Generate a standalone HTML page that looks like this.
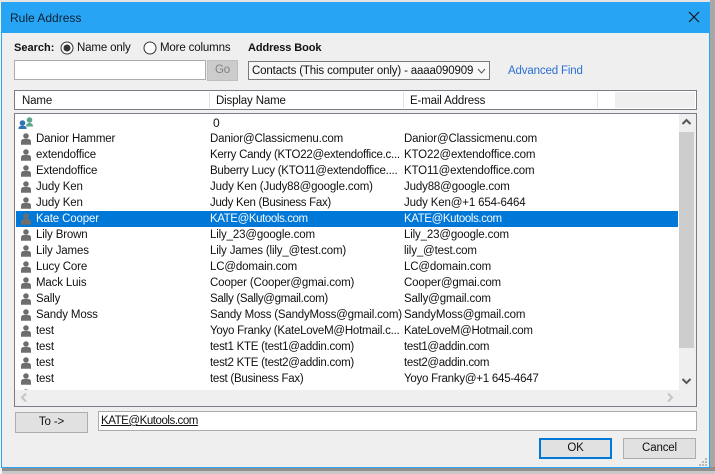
<!DOCTYPE html>
<html><head><meta charset="utf-8"><style>
html,body{margin:0;padding:0;width:715px;height:474px;overflow:hidden;background:#d8d8d8}
body{position:relative;font:11.5px "Liberation Sans",sans-serif;color:#111;letter-spacing:-.15px}
div,span,svg{position:absolute;box-sizing:border-box}
.t{white-space:nowrap;line-height:14px}
.r{left:0;width:665px;height:16px}
.r svg{left:4px;top:3px}
.r .a{left:21px;top:2px}.r .b{left:195px;top:2px}.r .c{left:389px;top:2px}
.r.sel{background:#0078d7;height:16px;color:#f4f8fc;left:1px;width:662px}
.r.sel svg{left:3px;top:2px}
.r.sel .a{left:20px;top:1px}.r.sel .b{left:194px;top:1px}.r.sel .c{left:388px;top:1px}
.btn{background:#e1e1e1;border:1px solid #adadad;text-align:center;line-height:19px}
</style></head><body>
<svg width="0" height="0" style="left:0;top:0"><defs><symbol id="p" viewBox="0 0 14 14"><circle cx="7" cy="3" r="2.800" fill="#6e6e6e"/><path d="M2 11.800V8.700C2 6.900 3.400 6 5 6H9C10.600 6 12 6.900 12 8.700V11.800Z" fill="#6e6e6e"/></symbol></defs></svg>
<div style="left:0;top:0;width:2px;height:474px;background:#f4f4f4"></div>
<div style="left:0;top:0;width:715px;height:2px;background:#e4e4e4"></div>
<div style="left:710px;top:0;width:5px;height:474px;background:#a8a8a8"></div>
<div style="left:2px;top:467px;width:713px;height:4px;background:#8f8f8f"></div>
<div style="left:2px;top:471px;width:713px;height:3px;background:#c8c8c8"></div>
<div id="w" style="left:1px;top:2px;width:709px;height:466px;background:#efefef;border:1px solid #2aa5f3;border-top:0"></div>
<div style="left:1px;top:2px;width:709px;height:31px;background:#27a4f4"></div>
<div class="t" style="left:10px;top:11px;font-size:12px;letter-spacing:0;color:#0c2030">Rule Address</div>
<svg style="left:687px;top:10px" width="14" height="14" viewBox="0 0 14 14"><path d="M2 2L12 12M12 2L2 12" stroke="#111" stroke-width="1.100" fill="none"/></svg>

<div class="t" style="left:14px;top:41px;font-weight:bold;font-size:11px;letter-spacing:0">Search:</div>
<svg style="left:60px;top:41px" width="14" height="14" viewBox="0 0 14 14"><circle cx="7" cy="7" r="6" fill="#fff" stroke="#333"/><circle cx="7" cy="7" r="3.500" fill="#333"/></svg>
<div class="t" style="left:77px;top:41px">Name only</div>
<svg style="left:143px;top:41px" width="14" height="14" viewBox="0 0 14 14"><circle cx="7" cy="7" r="6" fill="#fff" stroke="#333"/></svg>
<div class="t" style="left:160px;top:41px">More columns</div>
<div class="t" style="left:248px;top:41px;font-weight:bold;font-size:11px;letter-spacing:-.1px">Address Book</div>
<div style="left:14px;top:60px;width:192px;height:20px;background:#fff;border:1px solid #ababab"></div>
<div class="btn" style="left:207px;top:60px;width:31px;height:21px;background:#ccc;border-color:#bfbfbf;color:#808080">Go</div>
<div style="left:248px;top:61px;width:242px;height:19px;background:#f8f8f8;border:1px solid #7a7a7a;overflow:hidden"><div class="t" style="left:3px;top:2px;width:221px;overflow:hidden">Contacts (This computer only) - aaaa090909</div></div>
<svg style="left:477px;top:68px" width="9" height="6" viewBox="0 0 9 6"><path d="M1 1L4.500 5 8 1" stroke="#555" fill="none"/></svg>
<div class="t" style="left:508px;top:64px;color:#2a6fd6">Advanced Find</div>

<div style="left:14px;top:90px;width:683px;height:20px;background:#fff;border:1px solid #7c7c88">
<div class="t" style="left:7px;top:3px">Name</div><div class="t" style="left:201px;top:3px">Display Name</div><div class="t" style="left:395px;top:3px">E-mail Address</div>
<div style="left:194px;top:1px;width:1px;height:16px;background:#e2e2e2"></div><div style="left:388px;top:1px;width:1px;height:16px;background:#e2e2e2"></div><div style="left:582px;top:1px;width:1px;height:16px;background:#e2e2e2"></div>
<div style="left:600px;top:1px;width:80px;height:16px;background:#efefef"></div></div>

<div id="l" style="left:14px;top:113px;width:683px;height:294px;background:#efefef;border:1px solid #7c7c88;overflow:hidden">
<div style="left:0;top:0;width:664px;height:276px;background:#fff;overflow:hidden">
<svg style="left:3px;top:3px" width="16" height="13" viewBox="0 0 16 13"><circle cx="11.500" cy="3" r="2.800" fill="#5fa58c"/><path d="M8 9.500C8 7 9.500 6 11.500 6S15 7 15 9.500Z" fill="#5fa58c"/><circle cx="4.500" cy="6" r="2.800" fill="#2f74b5"/><path d="M.5 12V11C.5 9.500 2.500 8.800 4.500 8.800S8.500 9.500 8.500 11V12Z" fill="#2f74b5"/></svg>
<div class="t" style="left:198px;top:2px;font-size:12px">0</div>
<div class="r" style="top:16px"><svg width="14" height="14"><use href="#p"/></svg><div class="t a">Danior Hammer</div><div class="t b">Danior@Classicmenu.com</div><div class="t c">Danior@Classicmenu.com</div></div>
<div class="r" style="top:32px"><svg width="14" height="14"><use href="#p"/></svg><div class="t a">extendoffice</div><div class="t b" style="letter-spacing:-.26px">Kerry Candy (KTO22@extendoffice.c...</div><div class="t c">KTO22@extendoffice.com</div></div>
<div class="r" style="top:48px"><svg width="14" height="14"><use href="#p"/></svg><div class="t a">Extendoffice</div><div class="t b" style="letter-spacing:-.25px">Buberry Lucy (KTO11@extendoffice....</div><div class="t c">KTO11@extendoffice.com</div></div>
<div class="r" style="top:64px"><svg width="14" height="14"><use href="#p"/></svg><div class="t a">Judy Ken</div><div class="t b">Judy Ken (Judy88@google.com)</div><div class="t c">Judy88@google.com</div></div>
<div class="r" style="top:80px"><svg width="14" height="14"><use href="#p"/></svg><div class="t a">Judy Ken</div><div class="t b" style="letter-spacing:-.3px">Judy Ken (Business Fax)</div><div class="t c">Judy Ken@+1 654-6464</div></div>
<div class="r sel" style="top:97px"><svg width="14" height="14"><use href="#p"/></svg><div class="t a">Kate Cooper</div><div class="t b" style="letter-spacing:-.4px">KATE@Kutools.com</div><div class="t c" style="letter-spacing:-.4px">KATE@Kutools.com</div></div>
<div class="r" style="top:112px"><svg width="14" height="14"><use href="#p"/></svg><div class="t a">Lily Brown</div><div class="t b">Lily_23@google.com</div><div class="t c">Lily_23@google.com</div></div>
<div class="r" style="top:128px"><svg width="14" height="14"><use href="#p"/></svg><div class="t a">Lily James</div><div class="t b">Lily James (lily_@test.com)</div><div class="t c">lily_@test.com</div></div>
<div class="r" style="top:144px"><svg width="14" height="14"><use href="#p"/></svg><div class="t a">Lucy Core</div><div class="t b">LC@domain.com</div><div class="t c">LC@domain.com</div></div>
<div class="r" style="top:160px"><svg width="14" height="14"><use href="#p"/></svg><div class="t a">Mack Luis</div><div class="t b">Cooper (Cooper@gmai.com)</div><div class="t c">Cooper@gmai.com</div></div>
<div class="r" style="top:176px"><svg width="14" height="14"><use href="#p"/></svg><div class="t a">Sally</div><div class="t b" style="letter-spacing:-.3px">Sally (Sally@gmail.com)</div><div class="t c">Sally@gmail.com</div></div>
<div class="r" style="top:192px"><svg width="14" height="14"><use href="#p"/></svg><div class="t a">Sandy Moss</div><div class="t b" style="letter-spacing:-.2px">Sandy Moss (SandyMoss@gmail.com)</div><div class="t c">SandyMoss@gmail.com</div></div>
<div class="r" style="top:208px"><svg width="14" height="14"><use href="#p"/></svg><div class="t a">test</div><div class="t b" style="letter-spacing:-.24px">Yoyo Franky (KateLoveM@Hotmail.c...</div><div class="t c" style="letter-spacing:-.24px">KateLoveM@Hotmail.com</div></div>
<div class="r" style="top:224px"><svg width="14" height="14"><use href="#p"/></svg><div class="t a">test</div><div class="t b" style="letter-spacing:-.26px">test1 KTE (test1@addin.com)</div><div class="t c" style="letter-spacing:-.3px">test1@addin.com</div></div>
<div class="r" style="top:240px"><svg width="14" height="14"><use href="#p"/></svg><div class="t a">test</div><div class="t b" style="letter-spacing:-.26px">test2 KTE (test2@addin.com)</div><div class="t c" style="letter-spacing:-.3px">test2@addin.com</div></div>
<div class="r" style="top:256px"><svg width="14" height="14"><use href="#p"/></svg><div class="t a">test</div><div class="t b" style="letter-spacing:-.26px">test (Business Fax)</div><div class="t c" style="letter-spacing:-.24px">Yoyo Franky@+1 645-4647</div></div>
<div class="r" style="top:272px"><svg width="14" height="14"><use href="#p"/></svg></div>
</div>
<div style="left:664px;top:18px;width:15px;height:216px;background:#cdcdcd"></div>
<svg style="left:666px;top:4px" width="11" height="8" viewBox="0 0 11 8"><path d="M1.500 6L5.500 2 9.500 6" stroke="#555" stroke-width="2" fill="none"/></svg>
<svg style="left:666px;top:263px" width="11" height="8" viewBox="0 0 11 8"><path d="M1.500 2L5.500 6 9.500 2" stroke="#555" stroke-width="2" fill="none"/></svg>
<svg style="left:5px;top:278px" width="8" height="11" viewBox="0 0 8 11"><path d="M6 1.500L2 5.500 6 9.500" stroke="#c4c4c4" stroke-width="2" fill="none"/></svg>
<svg style="left:651px;top:278px" width="8" height="11" viewBox="0 0 8 11"><path d="M2 1.500L6 5.500 2 9.500" stroke="#c4c4c4" stroke-width="2" fill="none"/></svg>
</div>

<div class="btn" style="left:15px;top:412px;width:73px;height:21px">To -&gt;</div>
<div style="left:98px;top:411px;width:599px;height:20px;background:#fff;border:1px solid #ababab"><div class="t" style="left:2px;top:2px;text-decoration:underline;letter-spacing:-.45px">KATE@Kutools.com</div></div>
<div class="btn" style="left:539px;top:438px;width:73px;height:21px;border:2px solid #0078d7;line-height:17px">OK</div>
<div class="btn" style="left:623px;top:438px;width:73px;height:21px">Cancel</div>
<svg style="left:699px;top:457px" width="10" height="10" viewBox="0 0 10 10"><path d="M6 1h2v2H6zM3 4h2v2H3zM6 4h2v2H6zM0 7h2v2H0zM3 7h2v2H3zM6 7h2v2H6z" fill="#b8b8b8"/></svg>
</body></html>
